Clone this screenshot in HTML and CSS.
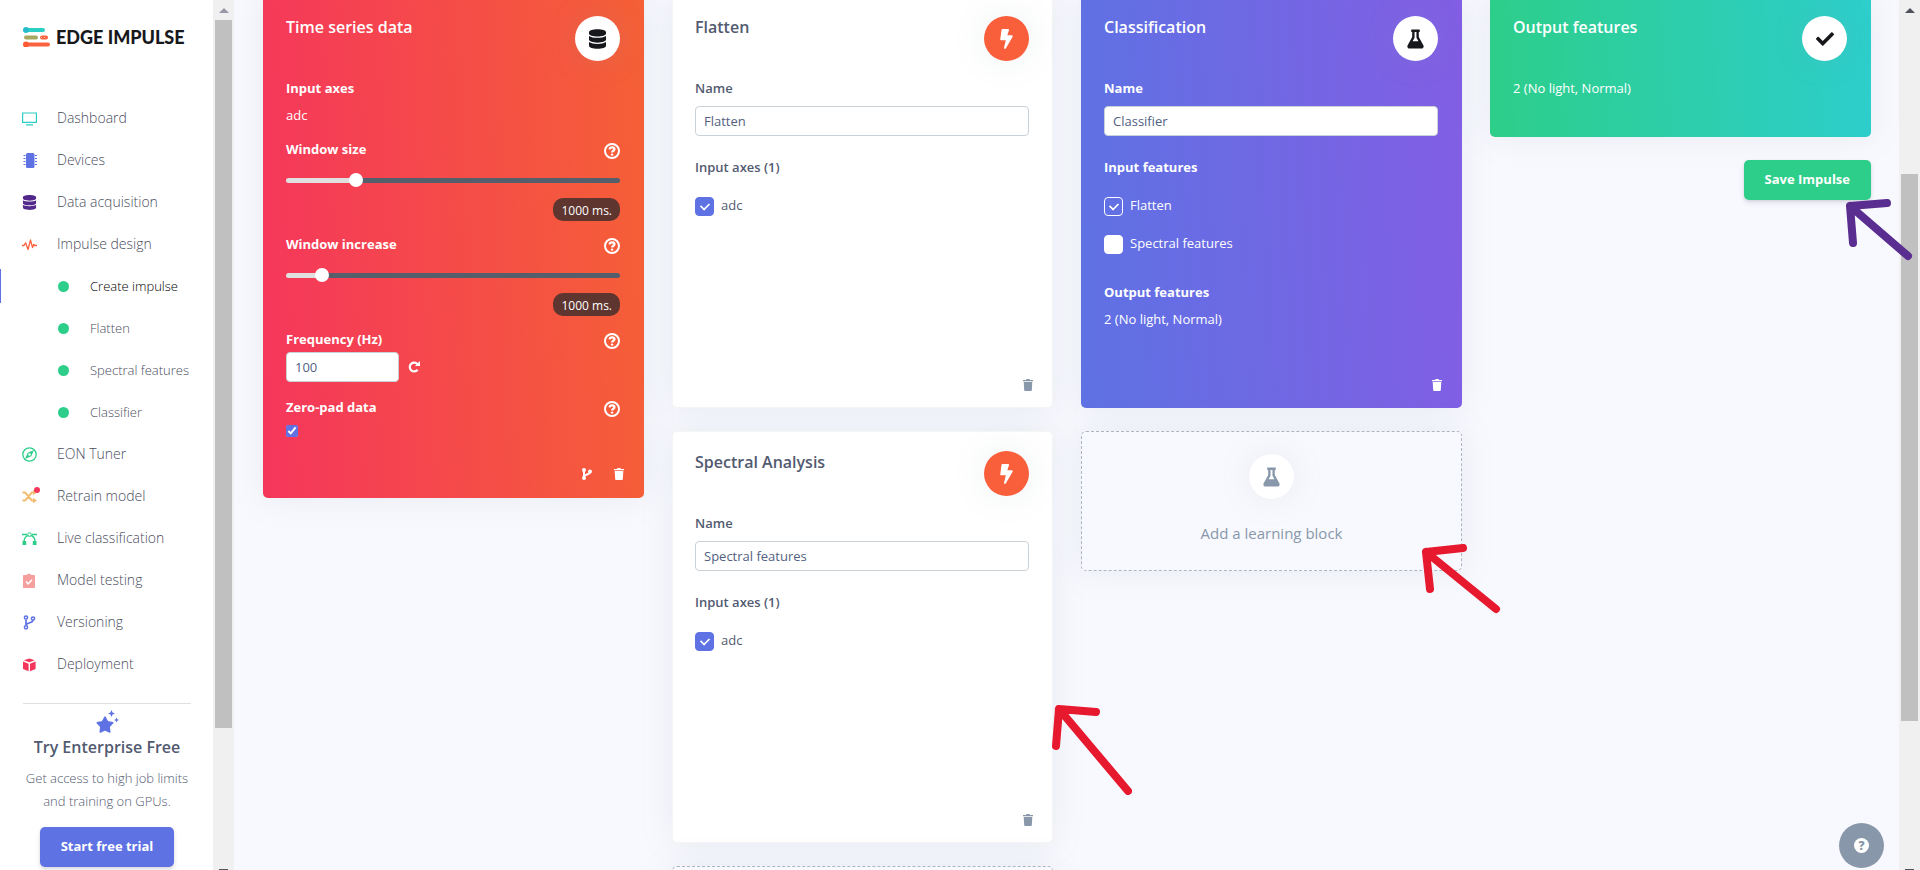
FILE: index.html
```html
<!DOCTYPE html>
<html lang="en">
<head>
    <meta charset="UTF-8">
    <meta name="viewport" content="width=device-width, initial-scale=1.0">
    <title>Create impulse - Edge Impulse</title>
    <link rel="stylesheet" href="styles.css">
</head>
<body>
    <!-- Icon set -->
    <svg class="icon-set" aria-hidden="true">
        <symbol id="database" viewBox="0 0 448 512"><path d="M448 73.143v45.714C448 159.143 347.667 192 224 192S0 159.143 0 118.857V73.143C0 32.857 100.333 0 224 0s224 32.857 224 73.143zM448 176v102.857C448 319.143 347.667 352 224 352S0 319.143 0 278.857V176c48.125 33.143 136.208 48.572 224 48.572S399.874 209.143 448 176zm0 160v102.857C448 479.143 347.667 512 224 512S0 479.143 0 438.857V336c48.125 33.143 136.208 48.572 224 48.572S399.874 369.143 448 336z"/></symbol>
        <symbol id="bolt" viewBox="0 0 320 512"><path d="M296 160H180.6l42.6-129.8C227.2 15 215.7 0 200 0H56C44 0 33.8 8.9 32.2 20.8l-32 240C-1.7 275.2 9.5 288 24 288h118.7L96.6 482.5c-3.6 15.2 8 29.5 23.3 29.5 8.4 0 16.4-4.4 20.8-12l176-304c9.3-15.9-2.2-36-20.7-36z"/></symbol>
        <symbol id="check" viewBox="0 0 512 512"><path d="M173.898 439.404l-166.4-166.4c-9.997-9.997-9.997-26.206 0-36.204l36.203-36.204c9.997-9.998 26.207-9.998 36.204 0L192 312.69 432.095 72.596c9.997-9.997 26.207-9.997 36.204 0l36.203 36.204c9.997 9.997 9.997 26.206 0 36.204l-294.4 294.401c-9.998 9.997-26.207 9.997-36.204-.001z"/></symbol>
        <symbol id="flask" viewBox="0 0 18 20"><path fill-rule="evenodd" d="M4.500 0h9v2.500h-1v5.500l4.800 8.600c.900 1.700-.200 3.400-2 3.400H2.700c-1.800 0-2.900-1.700-2-3.400L5.500 8V2.500h-1zM8 2.500v6.200L5.900 12.500h6.200L10 8.700V2.500z"/></symbol>
        <symbol id="trash" viewBox="0 0 10 12"><path d="M0 1h3l.5-1h3L7 1h3v1.300H0zM.7 3h8.600l-.5 8c0 .6-.4 1-1 1H2.200c-.6 0-1-.4-1-1z"/></symbol>
        <symbol id="branch" viewBox="0 0 12 15"><path fill="none" stroke="currentColor" stroke-width="1.700" d="M2.500 4.500v6M9.500 5.200c0 3.300-7 1.800-7 5.300"/><g fill="none" stroke="currentColor" stroke-width="1.500"><circle cx="2.500" cy="2.500" r="1.600"/><circle cx="2.500" cy="12.300" r="1.600"/><circle cx="9.500" cy="3.500" r="1.600"/></g></symbol>
        <symbol id="branch-solid" viewBox="0 0 10 12"><path fill="none" stroke="currentColor" stroke-width="2" d="M2 2v8M8 4c0 3-6 2-6 5"/><circle cx="2" cy="2" r="2"/><circle cx="2" cy="10" r="2"/><circle cx="8" cy="3.500" r="2"/></symbol>
        <symbol id="help" viewBox="0 0 16 16"><circle cx="8" cy="8" r="7" fill="none" stroke="currentColor" stroke-width="2"/><path fill="none" stroke="currentColor" stroke-width="2.200" d="M5.600 6.300c.2-2.600 4.900-2.500 4.900 0 0 1.500-2.400 1.500-2.400 3.200"/><circle cx="8.100" cy="11.600" r="1.200"/></symbol>
        <symbol id="redo" viewBox="0 0 12 12"><path fill="none" stroke="currentColor" stroke-width="2.200" d="M9.800 3.600A4.400 4.400 0 1 0 9.600 8.800"/><path d="M12 0v5H7z"/></symbol>
    </svg>

    <aside class="sidebar">
        <a class="brand" href="#">
            <svg width="28" height="20" viewBox="0 0 28 20" aria-hidden="true">
                <g stroke-linecap="round" stroke-width="4">
                    <path stroke="#2dcec4" d="M3 3h17"/>
                    <path stroke="#a9a860" d="M3 10.500h10"/>
                    <path stroke="#fb6340" d="M19 10.500h4M3 17.500h22"/>
                </g>
                <circle cx="3" cy="3" r="3" fill="#27bccb"/>
                <circle cx="3" cy="17.500" r="3" fill="#fb5a35"/>
                <path stroke="#fff" stroke-dasharray="1 2" d="M18 10.500h6" opacity=".6"/>
            </svg>
            <span>EDGE IMPULSE</span>
        </a>

        <nav>
            <ul class="menu">
                <li><a href="#"><svg class="ico teal" viewBox="0 0 15 15"><path fill="none" stroke="currentColor" stroke-width="1.200" d="M.6 2h13.800v9.400H.6zM4 13.900h7"/></svg>Dashboard</a></li>
                <li><a href="#"><svg class="ico blue" viewBox="0 0 15 15"><rect x="4" y="0" width="8.500" height="15" rx="1.500"/><path stroke="currentColor" stroke-dasharray="2 9.500" stroke-width="1.200" d="M1.500 2.500H15M1.500 5.500H15M1.500 8.500H15M1.500 11.500H15"/></svg>Devices</a></li>
                <li><a href="#"><svg class="ico violet"><use href="#database"/></svg>Data acquisition</a></li>
                <li><a href="#"><svg class="ico orange" viewBox="0 0 15 15"><path fill="none" stroke="currentColor" stroke-width="1.300" stroke-linejoin="round" d="M0 8.500h2l1.600-2.800L6 12.500 8.500 3l2 7.500 1.300-3.200 1 1.200H15"/></svg>Impulse design</a>
                    <ul class="submenu">
                        <li class="active"><a href="#">Create impulse</a></li>
                        <li><a href="#">Flatten</a></li>
                        <li><a href="#">Spectral features</a></li>
                        <li><a href="#">Classifier</a></li>
                    </ul>
                </li>
                <li><a href="#"><svg class="ico green" viewBox="0 0 15 15"><circle cx="7.500" cy="7.500" r="6.700" fill="none" stroke="currentColor" stroke-width="1.300"/><path fill-rule="evenodd" d="M12 3 9.300 9.300 3 12l2.700-6.300zM7.500 6.200a1.300 1.300 0 1 0 0 2.600 1.300 1.300 0 0 0 0-2.600z"/></svg>EON Tuner</a></li>
                <li><a href="#"><span class="badge-icon"><svg class="ico sand" viewBox="0 0 15 15"><path fill="none" stroke="currentColor" stroke-width="2" d="M.5 3.500h2.700l6.600 8H12M.5 11.500h2.700l6.600-8H12"/><path d="m11 .7 4 2.800-4 2.800zM11 8.700l4 2.800-4 2.800z"/></svg></span>Retrain model</a></li>
                <li><a href="#"><svg class="ico green" viewBox="0 0 15 15"><path fill="none" stroke="currentColor" stroke-width="1.300" d="M0 3.500h5M10 3.500h5M2 11c0-4 2-6.500 5.500-6.500S13 7 13 11"/><circle cx="7.500" cy="3.500" r="1.800" fill="#fff" stroke="currentColor"/><path d="M.5 10h3.700v4H.5zM10.800 10h3.700v4h-3.700z"/></svg>Live classification</a></li>
                <li><a href="#"><svg class="ico pink" viewBox="0 0 15 15"><path d="M2 2h2.500a3 3 0 0 1 5 0H12c.6 0 1 .4 1 1v11c0 .6-.4 1-1 1H2c-.6 0-1-.4-1-1V3c0-.6.4-1 1-1z"/><path fill="none" stroke="#fff" stroke-width="1.500" d="m4 8.500 2.200 2.300L10 6.700"/></svg>Model testing</a></li>
                <li><a href="#"><svg class="ico blue"><use href="#branch"/></svg>Versioning</a></li>
                <li><a href="#"><svg class="ico red" viewBox="0 0 15 15"><path d="m7.300 1.500 5.500 1.700-5.500 2-5.500-2zM1 4.500l5.600 2.200v7.500L1 12zM13.600 4.500 8 6.700v7.500l5.600-2.200z"/></svg>Deployment</a></li>
            </ul>
        </nav>

        <section class="trial">
            <svg width="23" height="23" viewBox="0 0 23 23" aria-hidden="true"><path stroke="currentColor" stroke-width="1.500" stroke-linejoin="round" d="m9 7 2.600 4.800 5.200 1-3.700 3.900.7 5.300L9 19.800 4.200 22l.7-5.300-3.700-3.900 5.200-1z"/><path d="m15.500 0 1.100 2.400L19 3.500l-2.400 1.100L15.500 7l-1.100-2.400L12 3.500l2.400-1.100zM20.500 7.500l.8 1.700 1.700.8-1.700.8-.8 1.700-.8-1.700L18 10l1.700-.8z"/></svg>
            <h3>Try Enterprise Free</h3>
            <p>Get access to high job limits and training on GPUs.</p>
            <button class="btn primary" type="button">Start free trial</button>
        </section>
    </aside>

    <div class="scrollbar side-scroll"><i class="up"></i><i class="thumb"></i><i class="down"></i></div>

    <main class="impulse">
        <div class="column">
            <section class="card time-series">
                <header><h2>Time series data</h2><span class="circle"><svg width="17" height="20"><use href="#database"/></svg></span></header>
                <h4>Input axes</h4>
                <p class="value">adc</p>

                <div class="field">
                    <div class="label-row"><label for="window-size">Window size</label><button class="help" type="button" aria-label="About window size"><svg><use href="#help"/></svg></button></div>
                    <input type="range" id="window-size" min="0" max="1000" value="197" style="--fill: 21%">
                    <output class="pill" for="window-size">1000 ms.</output>
                </div>
                <div class="field">
                    <div class="label-row"><label for="window-increase">Window increase</label><button class="help" type="button" aria-label="About window increase"><svg><use href="#help"/></svg></button></div>
                    <input type="range" id="window-increase" min="0" max="1000" value="92" style="--fill: 11%">
                    <output class="pill" for="window-increase">1000 ms.</output>
                </div>
                <div class="field">
                    <div class="label-row"><label for="frequency">Frequency (Hz)</label><button class="help" type="button" aria-label="About frequency"><svg><use href="#help"/></svg></button></div>
                    <div class="frequency">
                        <input type="text" id="frequency" value="100">
                        <button class="icon-btn" type="button" aria-label="Reset frequency"><svg width="12" height="12"><use href="#redo"/></svg></button>
                    </div>
                </div>
                <div class="field">
                    <div class="label-row"><label for="zero-pad">Zero-pad data</label><button class="help" type="button" aria-label="About zero-pad"><svg><use href="#help"/></svg></button></div>
                    <input type="checkbox" class="small-check" id="zero-pad" checked>
                </div>
                <footer>
                    <button class="icon-btn" type="button" aria-label="Versions"><svg width="10" height="12"><use href="#branch-solid"/></svg></button>
                    <button class="icon-btn" type="button" aria-label="Delete"><svg width="10" height="12"><use href="#trash"/></svg></button>
                </footer>
            </section>
        </div>

        <div class="column">
            <section class="card">
                <header><h2>Flatten</h2><span class="circle orange-bg"><svg width="13" height="20"><use href="#bolt"/></svg></span></header>
                <label class="name" for="flatten-name">Name</label>
                <input type="text" id="flatten-name" value="Flatten">
                <h4>Input axes (1)</h4>
                <label class="option"><input type="checkbox" checked>adc</label>
                <footer><button class="icon-btn" type="button" aria-label="Delete"><svg width="10" height="12"><use href="#trash"/></svg></button></footer>
            </section>

            <section class="card pointed">
                <header><h2>Spectral Analysis</h2><span class="circle orange-bg"><svg width="13" height="20"><use href="#bolt"/></svg></span></header>
                <label class="name" for="spectral-name">Name</label>
                <input type="text" id="spectral-name" value="Spectral features">
                <h4>Input axes (1)</h4>
                <label class="option"><input type="checkbox" checked>adc</label>
                <footer><button class="icon-btn" type="button" aria-label="Delete"><svg width="10" height="12"><use href="#trash"/></svg></button></footer>
                <svg class="arrow arrow-card" width="80" height="90" viewBox="0 0 80 90" aria-hidden="true"><path d="M44 7 7 4 4 41M7 4l69 82"/></svg>
            </section>

            <a class="add-block" href="#" aria-label="Add a processing block"></a>
        </div>

        <div class="column">
            <section class="card classification">
                <header><h2>Classification</h2><span class="circle"><svg width="17" height="20"><use href="#flask"/></svg></span></header>
                <label class="name" for="classifier-name">Name</label>
                <input type="text" id="classifier-name" value="Classifier">
                <h4>Input features</h4>
                <label class="option"><input type="checkbox" checked>Flatten</label>
                <label class="option"><input type="checkbox">Spectral features</label>
                <h4 class="output-title">Output features</h4>
                <p class="value">2 (No light, Normal)</p>
                <footer><button class="icon-btn" type="button" aria-label="Delete"><svg width="10" height="12"><use href="#trash"/></svg></button></footer>
            </section>

            <a class="add-block" href="#"><span class="circle"><svg width="17" height="20"><use href="#flask"/></svg></span>Add a learning block
                <svg class="arrow arrow-add" width="80" height="70" viewBox="0 0 80 70" aria-hidden="true"><path d="M41 4 4 8l4 37M4 8l70 57"/></svg>
            </a>
        </div>

        <div class="column">
            <section class="card output">
                <header><h2>Output features</h2><span class="circle"><svg width="18" height="18"><use href="#check"/></svg></span></header>
                <p class="summary">2 (No light, Normal)</p>
            </section>
            <div class="save">
                <button class="btn success" type="button">Save Impulse</button>
                <svg class="arrow arrow-save" width="70" height="64" viewBox="0 0 70 64" aria-hidden="true"><path d="M41 4 4 7l3 37M4 7l58 50"/></svg>
            </div>
        </div>

        <button class="help-float" type="button" aria-label="Help"><span>?</span></button>
    </main>

    <div class="scrollbar page-scroll"><i class="up"></i><i class="thumb"></i><i class="down"></i></div>
</body>
</html>
```
FILE: styles.css
```css
* {
    margin: 0;
    padding: 0;
    box-sizing: border-box;
}

body {
    display: flex;
    height: 100vh;
    overflow: hidden;
    font-family: 'Open Sans', 'Noto Sans', sans-serif;
    font-size: 13px;
    line-height: 20px;
    color: #525a70;
    background-color: #f8f9fe;
}

a {
    color: inherit;
    text-decoration: none;
}

ul {
    list-style: none;
}

button,
input {
    font: inherit;
    color: inherit;
}

button {
    border: none;
    background: none;
    cursor: pointer;
}

svg {
    display: block;
    fill: currentColor;
}

.icon-set {
    position: absolute;
    width: 0;
    height: 0;
}

/* Sidebar */
.sidebar {
    flex: 0 0 213px;
    padding-top: 20px;
    background-color: #ffffff;
}

.brand {
    display: flex;
    align-items: center;
    gap: 5px;
    height: 34px;
    margin: 0 0 43px 23px;
    font-family: Lato, sans-serif;
    font-size: 18px;
    font-weight: 900;
    color: #17181c;
    white-space: nowrap;
}

.menu a {
    display: flex;
    align-items: center;
    gap: 20px;
    height: 42px;
    padding-left: 22px;
    font-size: 14px;
    font-weight: 300;
    color: #4a4d60;
}

.ico {
    width: 15px;
    height: 15px;
}

.menu .teal { color: #2dcec4; }
.menu .blue { color: #5e72e4; }
.menu .violet { color: #52288c; }
.menu .orange { color: #fb6340; }
.menu .green { color: #2dce89; }
.menu .sand { color: #f0bd72; }
.menu .pink { color: #f5a09f; }
.menu .red { color: #f5365c; }

.badge-icon {
    position: relative;
}

.badge-icon::after {
    content: '';
    position: absolute;
    top: -2px;
    right: -3px;
    width: 6px;
    height: 6px;
    border-radius: 50%;
    background-color: #f5365c;
}

.menu .submenu a {
    gap: 21px;
    padding-left: 58px;
    font-size: 13px;
}

.submenu a::before {
    content: '';
    width: 11px;
    height: 11px;
    border-radius: 50%;
    background-color: #2dce89;
}

.submenu .active {
    position: relative;
}

.submenu .active::before {
    content: '';
    position: absolute;
    top: 4px;
    bottom: 4px;
    left: 0;
    width: 1px;
    background-color: #5e72e4;
}

.menu .submenu .active a {
    color: #000000;
}

.trial {
    display: flex;
    flex-direction: column;
    align-items: center;
    margin: 18px 22px 0 23px;
    padding-top: 6px;
    border-top: 1px solid #e0e0e0;
    text-align: center;
}

.trial > svg {
    color: #5e72e4;
}

.trial h3 {
    margin-top: 2px;
    font-size: 16px;
    font-weight: 600;
    line-height: 24px;
    white-space: nowrap;
}

.trial p {
    margin: 8px 0 14px;
    font-weight: 300;
    line-height: 23px;
}

.btn {
    height: 40px;
    padding: 0 21px 2px;
    border-radius: 5px;
    font-weight: 700;
    color: #ffffff;
    box-shadow: 0 3px 5px rgba(50, 50, 93, 0.12), 0 1px 3px rgba(0, 0, 0, 0.08);
}

.primary {
    background-color: #5e72e4;
}

.success {
    background-color: #2dce89;
}

/* Scrollbars */
.scrollbar {
    display: flex;
    flex: 0 0 21px;
    flex-direction: column;
    align-items: center;
    background-color: #f0f0f0;
}

.scrollbar .up {
    margin: 8px 0 7px;
    border: 5px solid transparent;
    border-top: none;
    border-bottom-color: #50525e;
}

.scrollbar .thumb {
    width: 17px;
    background-color: #c0c0c0;
}

.scrollbar .down {
    width: 9px;
    height: 1px;
    margin-top: auto;
    background-color: #50525e;
}

.side-scroll .up {
    border-bottom-color: #9698a6;
}

.side-scroll .thumb {
    height: 81.4%;
}

.page-scroll .thumb {
    height: 62.9%;
    margin-top: 154px;
}

/* Impulse blocks */
.impulse {
    position: relative;
    z-index: 1;
    flex: 1;
    display: grid;
    grid-template-columns: repeat(4, minmax(0, 1fr));
    align-items: start;
    gap: 28px;
    min-width: 0;
    padding: 0 28px 0 29px;
}

.column {
    display: flex;
    flex-direction: column;
    gap: 23px;
    margin-top: -4px;
}

.card {
    display: flex;
    flex-direction: column;
    min-height: 412px;
    padding: 19px 23px 16px 22px;
    border: 1px solid rgba(0, 0, 0, 0.04);
    border-radius: 5px;
    background-color: #ffffff;
    box-shadow: 0 0 32px rgba(136, 152, 170, 0.15);
}

.card header {
    display: flex;
    justify-content: space-between;
    align-items: flex-start;
    margin-bottom: 17px;
}

h2 {
    font-size: 16px;
    font-weight: 600;
    line-height: 22px;
}

h4,
.name,
.label-row label {
    font-size: 13px;
    font-weight: 600;
    line-height: 20px;
}

.circle {
    display: flex;
    align-items: center;
    justify-content: center;
    width: 45px;
    height: 45px;
    border-radius: 50%;
    background-color: #ffffff;
    color: #17181c;
    box-shadow: 0 0 32px rgba(136, 152, 170, 0.15);
}

.circle.orange-bg {
    background-color: #f95f3a;
    color: #ffffff;
}

.time-series,
.classification,
.output {
    border-color: transparent;
    background-origin: border-box;
    color: #ffffff;
}

.time-series {
    min-height: 502px;
    padding-bottom: 17px;
    background-image: linear-gradient(87deg, #f5365c, #f56036);
}

.classification {
    background-image: linear-gradient(87deg, #5e72e4, #825ee4);
}

.output {
    min-height: 141px;
    background-image: linear-gradient(87deg, #2dce89, #2dcecc);
}

.time-series h4,
.time-series label,
.classification h4,
.classification .name {
    font-weight: 700;
}

.value {
    margin-top: 7px;
    font-weight: 500;
}

.summary {
    font-weight: 500;
}

input[type="text"] {
    width: 100%;
    height: 30px;
    padding: 0 8px;
    border: 1px solid #cad1d7;
    border-radius: 4px;
    background-color: #ffffff;
    color: #525f7f;
}

.name {
    margin-bottom: 8px;
}

.name + input {
    margin-bottom: 21px;
}

.option {
    display: flex;
    gap: 7px;
    height: 20px;
    margin-top: 18px;
}

.classification .option {
    font-weight: 500;
}

.option input {
    appearance: none;
    display: flex;
    align-items: center;
    justify-content: center;
    width: 19px;
    height: 19px;
    margin-top: 2px;
    border: 1px solid #ffffff;
    border-radius: 4px;
    background-color: #ffffff;
}

.option input:checked {
    border-color: #5e72e4;
    background-color: #5e72e4;
}

.classification .option input:checked {
    border-color: #ffffff;
    background-color: transparent;
}

.option input:checked::after {
    content: '';
    width: 8px;
    height: 5px;
    border: solid #ffffff;
    border-width: 0 0 2px 2px;
    transform: translateY(-1px) rotate(-45deg) scale(0.85);
}

.output-title {
    margin-top: 29px;
}

.card footer {
    display: flex;
    justify-content: flex-end;
    gap: 22px;
    margin: auto -4px 0 0;
}

.icon-btn {
    color: inherit;
}

.card:not(.time-series):not(.classification) .icon-btn {
    color: #8898aa;
}

/* Time series settings */
.field {
    display: flex;
    flex-direction: column;
    margin-top: 14px;
}

.field + .field {
    margin-top: 13px;
}

.label-row {
    display: flex;
    justify-content: space-between;
    height: 20px;
}

.help,
.help svg {
    width: 16px;
    height: 16px;
}

.help {
    margin-top: 4px;
}

input[type="range"] {
    appearance: none;
    width: 100%;
    height: 14px;
    margin: 14px 0 11px;
    background: none;
}

input[type="range"]::-webkit-slider-runnable-track {
    height: 5px;
    border-radius: 3px;
    background: linear-gradient(90deg, #e0e0e0 var(--fill), #555e6b var(--fill));
}

input[type="range"]::-webkit-slider-thumb {
    appearance: none;
    width: 14px;
    height: 14px;
    margin-top: -5px;
    border-radius: 50%;
    background-color: #ffffff;
}

.pill {
    align-self: flex-end;
    height: 23px;
    padding: 0 8px;
    border-radius: 10px;
    background-color: #5e352f;
    font-size: 12px;
    font-weight: 500;
    line-height: 25px;
}

.frequency {
    display: flex;
    align-items: center;
    gap: 9px;
    margin: 3px 0 2px;
}

.frequency input[type="text"] {
    width: 113px;
}

.small-check {
    width: 12px;
    height: 12px;
    margin-top: 8px;
    accent-color: #5e72e4;
}

/* Placeholder blocks */
.add-block {
    position: relative;
    display: flex;
    flex-direction: column;
    align-items: center;
    gap: 23px;
    height: 140px;
    padding-top: 22px;
    border: 1px dashed #adb5bd;
    border-radius: 5px;
    background-color: #f8f9fe;
    font-size: 15px;
    line-height: 22px;
    color: #8898aa;
    box-shadow: 0 0 32px rgba(136, 152, 170, 0.15);
}

.add-block .circle {
    color: #8898aa;
}

.save {
    position: relative;
    align-self: flex-end;
}

/* Hand-drawn arrows */
.pointed {
    position: relative;
}

.arrow {
    position: absolute;
    z-index: 2;
    fill: none;
    stroke: #e6192e;
    stroke-width: 8;
    stroke-linecap: round;
    stroke-linejoin: round;
    pointer-events: none;
}

.arrow-card {
    right: -80px;
    bottom: 47px;
}

.arrow-add {
    right: -41px;
    bottom: -44px;
}

.arrow-save {
    right: -45px;
    bottom: -63px;
    stroke: #5a2d91;
}

.help-float {
    position: fixed;
    right: 36px;
    bottom: 2px;
    display: flex;
    align-items: center;
    justify-content: center;
    width: 45px;
    height: 45px;
    border-radius: 50%;
    background-color: #8898aa;
}

.help-float span {
    width: 15px;
    height: 15px;
    border-radius: 50%;
    background-color: #ffffff;
    color: #8898aa;
    font-size: 12px;
    font-weight: 800;
    line-height: 15px;
}
```
